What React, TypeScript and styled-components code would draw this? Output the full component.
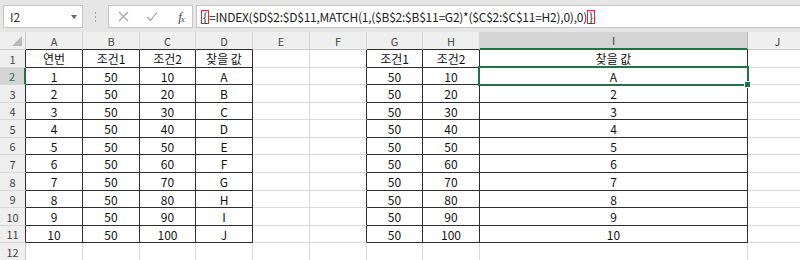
import React from 'react';
import styled, { createGlobalStyle } from 'styled-components';

const GlobalStyle = createGlobalStyle`
  html, body { margin: 0; padding: 0; background: #fff; overflow: hidden; }
  body { font-family: "Noto Sans CJK KR", "Liberation Sans", sans-serif; }
`;

const COLS = ['A', 'B', 'C', 'D', 'E', 'F', 'G', 'H', 'I', 'J'];
const COL_W = [57, 57, 56, 57, 57, 57, 56, 57, 268, 60];
const ROW_H = [18, 17, 18, 17, 18, 17, 18, 18, 17, 18, 17, 18];

const GRID = '#dadada';
const DARK = '#2e2e2e';
const GREEN = '#217346';

const LETTERS = 'ABCDEFGHIJ'.split('');

const cellValue = (r: number, c: number): string => {
  if (r === 1) {
    return ['연번', '조건1', '조건2', '찾을 값', '', '', '조건1', '조건2', '찾을 값', ''][c];
  }
  if (r >= 2 && r <= 11) {
    const n = r - 1;
    switch (c) {
      case 0: return String(n);
      case 1: return '50';
      case 2: return String(n * 10);
      case 3: return LETTERS[n - 1];
      case 6: return '50';
      case 7: return String(n * 10);
      case 8: return n === 1 ? 'A' : String(n);
      default: return '';
    }
  }
  return '';
};

const inTable = (r: number, c: number) =>
  r >= 1 && r <= 11 && ((c >= 0 && c <= 3) || (c >= 6 && c <= 8));

const Sheet = styled.div`
  width: 800px;
  height: 260px;
  display: flex;
  flex-direction: column;
  overflow: hidden;
  background: #fff;
`;

const FormulaBar = styled.div`
  height: 32px;
  flex: none;
  box-sizing: border-box;
  background: #e6e6e6;
  display: flex;
  align-items: flex-start;
  padding: 5px 0 0 3px;
`;

const NameBox = styled.div`
  width: 80px;
  height: 23px;
  box-sizing: border-box;
  background: #fff;
  border: 1px solid #c6c6c6;
  display: flex;
  align-items: center;
  justify-content: space-between;
  padding: 0 5px 0 6px;
  font-size: 12px;
  color: #333;
`;

const Caret = styled.span`
  width: 0;
  height: 0;
  border-left: 3.5px solid transparent;
  border-right: 3.5px solid transparent;
  border-top: 4px solid #666;
`;

const Dots = styled.div`
  width: 25px;
  height: 23px;
  display: flex;
  flex-direction: column;
  align-items: center;
  justify-content: center;
  gap: 2px;
  & > i {
    width: 1px;
    height: 2px;
    background: #a8a8a8;
  }
`;

const ButtonBox = styled.div`
  width: 85px;
  height: 23px;
  box-sizing: border-box;
  background: #fff;
  border: 1px solid #c6c6c6;
  display: flex;
  align-items: center;
  gap: 7px;
  padding-left: 3px;
`;

const IconBtn = styled.span`
  width: 22px;
  height: 20px;
  display: flex;
  align-items: center;
  justify-content: center;
`;

const Fx = styled.span`
  font-family: "Liberation Serif", serif;
  font-style: italic;
  font-size: 13px;
  color: #444;
  letter-spacing: -1px;
  & > sub {
    font-size: 9px;
    vertical-align: baseline;
    position: relative;
    top: 1px;
  }
`;

const FormulaInput = styled.div`
  margin-left: 3px;
  flex: 1;
  height: 23px;
  box-sizing: border-box;
  background: #fff;
  border: 1px solid #c6c6c6;
  border-right: none;
  display: flex;
  align-items: center;
  padding-left: 4px;
  font-size: 12px;
  letter-spacing: -0.24px;
  color: #222;
  white-space: nowrap;
`;

const Brace = styled.span`
  display: inline-flex;
  align-items: center;
  justify-content: center;
  width: 8px;
  height: 14px;
  box-sizing: border-box;
  border: 1px solid #e8262b;
  line-height: 1;
  letter-spacing: 0;
`;

const Grid = styled.div`
  display: grid;
  grid-template-columns: 26px ${COL_W.map((w) => `${w}px`).join(' ')};
  grid-template-rows: 18px ${ROW_H.map((h) => `${h}px`).join(' ')};
  font-size: 12px;
`;

const Corner = styled.div`
  position: relative;
  box-sizing: border-box;
  background: #efefef;
  border-right: 1px solid #c8c8c8;
  border-bottom: 1px solid #c8c8c8;
`;

const CornerTri = styled.span`
  position: absolute;
  right: 3px;
  bottom: 3px;
  width: 0;
  height: 0;
  border-left: 10px solid transparent;
  border-bottom: 10px solid #b9b9b9;
`;

const ColHeader = styled.div<{ $selected: boolean; $bottom: string }>`
  box-sizing: border-box;
  background: ${(p) => (p.$selected ? '#d4d4d4' : '#efefef')};
  border-right: 1px solid ${(p) => (p.$selected ? '#b8b8b8' : '#d4d4d4')};
  border-bottom: ${(p) => (p.$selected ? `2px solid ${GREEN}` : `1px solid ${p.$bottom}`)};
  display: flex;
  align-items: center;
  justify-content: center;
  font-size: 11px;
  color: #444;
`;

const RowHeader = styled.div<{ $selected: boolean; $right: string }>`
  box-sizing: border-box;
  background: ${(p) => (p.$selected ? '#d4d4d4' : '#efefef')};
  border-right: ${(p) => (p.$selected ? `2px solid ${GREEN}` : `1px solid ${p.$right}`)};
  border-bottom: 1px solid #d8d8d8;
  display: flex;
  align-items: center;
  justify-content: center;
  font-size: 11px;
  color: ${(p) => (p.$selected ? GREEN : '#444')};
`;

const Cell = styled.div<{ $right: string; $bottom: string; $active: boolean }>`
  position: relative;
  z-index: ${(p) => (p.$active ? 2 : 0)};
  box-sizing: border-box;
  border-right: 1px solid ${(p) => p.$right};
  border-bottom: 1px solid ${(p) => p.$bottom};
  display: flex;
  align-items: center;
  justify-content: center;
  color: #111;
  white-space: nowrap;
`;

const Selection = styled.span`
  position: absolute;
  left: -2px;
  top: -2px;
  right: -2px;
  bottom: -2px;
  border: 2px solid ${GREEN};
  pointer-events: none;
  &::after {
    content: '';
    position: absolute;
    right: -4px;
    bottom: -4px;
    width: 5px;
    height: 5px;
    background: ${GREEN};
    border: 1px solid #fff;
  }
`;

const XIcon = () => (
  <svg width="11" height="11" viewBox="0 0 11 11">
    <path d="M1 1L10 10M10 1L1 10" stroke="#a6a6a6" strokeWidth="1.2" fill="none" />
  </svg>
);

const CheckIcon = () => (
  <svg width="12" height="11" viewBox="0 0 12 11">
    <path d="M1 6L4.5 9.5L11 1" stroke="#a6a6a6" strokeWidth="1.2" fill="none" />
  </svg>
);

export default function App() {
  const rows = Array.from({ length: 12 }, (_, i) => i + 1);
  return (
    <Sheet>
      <GlobalStyle />
      <FormulaBar>
        <NameBox>
          <span>I2</span>
          <Caret />
        </NameBox>
        <Dots>
          <i />
          <i />
          <i />
        </Dots>
        <ButtonBox>
          <IconBtn><XIcon /></IconBtn>
          <IconBtn><CheckIcon /></IconBtn>
          <IconBtn>
            <Fx>f<sub>x</sub></Fx>
          </IconBtn>
        </ButtonBox>
        <FormulaInput>
          <Brace>{'{'}</Brace>
          <span>=INDEX($D$2:$D$11,MATCH(1,($B$2:$B$11=G2)*($C$2:$C$11=H2),0),0)</span>
          <Brace>{'}'}</Brace>
        </FormulaInput>
      </FormulaBar>
      <Grid>
        <Corner>
          <CornerTri />
        </Corner>
        {COLS.map((col, c) => (
          <ColHeader key={col} $selected={c === 8} $bottom={inTable(1, c) ? DARK : '#c8c8c8'}>
            {col}
          </ColHeader>
        ))}
        {rows.map((r) => (
          <React.Fragment key={r}>
            <RowHeader $selected={r === 2} $right={inTable(r, 0) ? DARK : '#c6c6c6'}>
              {r}
            </RowHeader>
            {COLS.map((col, c) => {
              const right = inTable(r, c) || inTable(r, c + 1) ? DARK : GRID;
              const bottom = inTable(r, c) || inTable(r + 1, c) ? DARK : GRID;
              const active = r === 2 && c === 8;
              return (
                <Cell key={col} $right={right} $bottom={bottom} $active={active}>
                  {cellValue(r, c)}
                  {active && <Selection />}
                </Cell>
              );
            })}
          </React.Fragment>
        ))}
      </Grid>
    </Sheet>
  );
}
